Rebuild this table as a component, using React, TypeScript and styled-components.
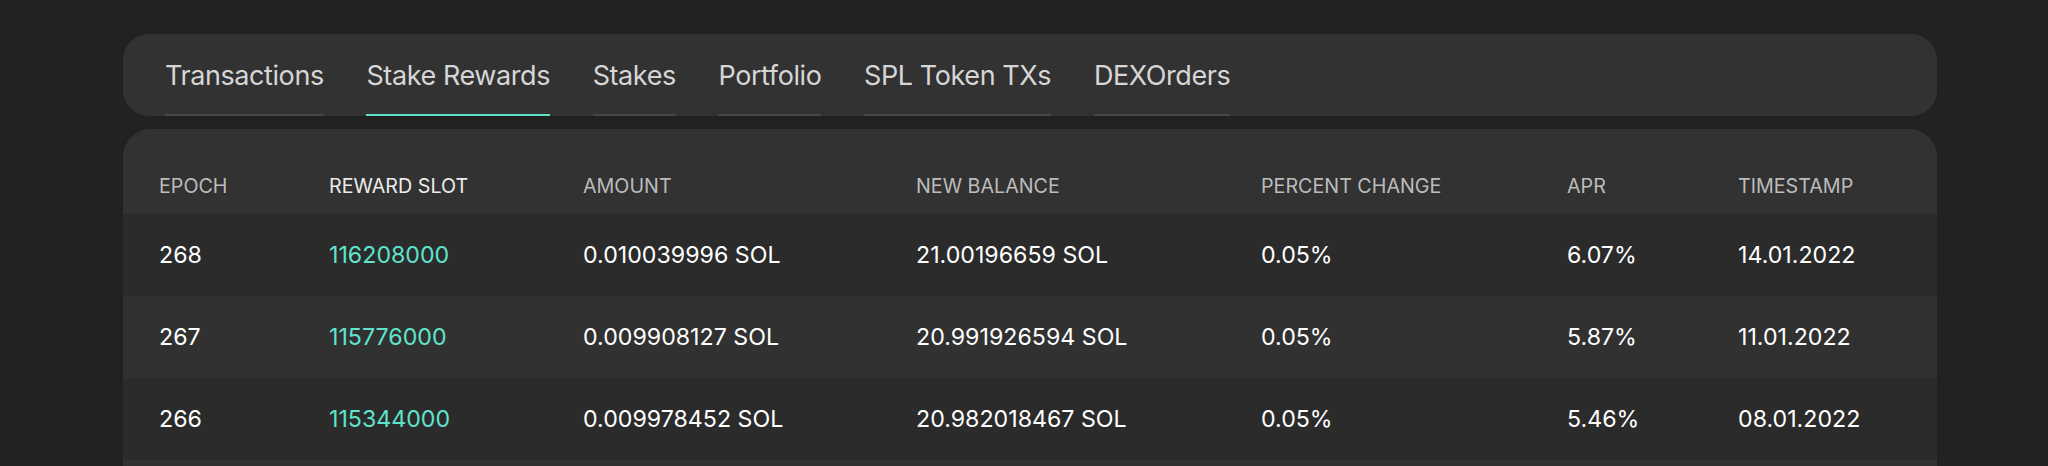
import React from "react";
import styled, { createGlobalStyle } from "styled-components";

const GlobalStyle = createGlobalStyle`
  html, body {
    margin: 0;
    padding: 0;
    background: #242424;
  }
  body {
    font-family: Inter, "Noto Sans", "Liberation Sans", sans-serif;
    -webkit-font-smoothing: antialiased;
  }
`;

const Page = styled.div`
  padding: 34px 111px 0 123px;
  min-height: 466px;
  box-sizing: border-box;
  background: #232323;
`;

const TabBar = styled.nav`
  display: flex;
  align-items: stretch;
  gap: 42.7px;
  height: 82px;
  padding: 0 42px;
  border-radius: 26px;
  background: #323232;
  box-sizing: border-box;
  overflow: hidden;
  box-shadow: 0 0 10px rgba(0, 0, 0, 0.12);
`;

const Tab = styled.div<{ $active?: boolean }>`
  display: flex;
  align-items: center;
  box-sizing: border-box;
  padding-top: 2px;
  font-size: 27px;
  letter-spacing: -0.42px;
  color: #d6d6d6;
  border-bottom: 2px solid ${(p) => (p.$active ? "#5fe0c9" : "#474747")};
  white-space: nowrap;
`;

const Card = styled.section`
  margin-top: 13px;
  border-radius: 28px;
  background: #323232;
  overflow: hidden;
  box-shadow: 0 0 10px rgba(0, 0, 0, 0.12);
`;

const COLS = "170px 254px 333px 345px 306px 171px 1fr";

const HeadRow = styled.div`
  display: grid;
  grid-template-columns: ${COLS};
  align-items: center;
  height: 85px;
  padding: 28px 36px 0;
  box-sizing: border-box;
  background: #323232;
`;

const HeadCell = styled.div<{ $bright?: boolean }>`
  font-size: 19.7px;
  color: ${(p) => (p.$bright ? "#ececec" : "#bcbcbc")};
  text-transform: uppercase;
  white-space: nowrap;
`;

const Row = styled.div<{ $alt?: boolean }>`
  display: grid;
  grid-template-columns: ${COLS};
  align-items: center;
  height: 82px;
  padding: 0 36px;
  box-sizing: border-box;
  background: ${(p) => (p.$alt ? "#313131" : "#2b2b2b")};
`;

const Cell = styled.div<{ $link?: boolean }>`
  font-size: 23.2px;
  color: ${(p) => (p.$link ? "#5fe3cc" : "#ffffff")};
  white-space: nowrap;
`;

const tabs = ["Transactions", "Stake Rewards", "Stakes", "Portfolio", "SPL Token TXs", "DEXOrders"];
const headers = ["Epoch", "Reward Slot", "Amount", "New Balance", "Percent Change", "APR", "Timestamp"];

const rows = [
  ["268", "116208000", "0.010039996 SOL", "21.00196659 SOL", "0.05%", "6.07%", "14.01.2022"],
  ["267", "115776000", "0.009908127 SOL", "20.991926594 SOL", "0.05%", "5.87%", "11.01.2022"],
  ["266", "115344000", "0.009978452 SOL", "20.982018467 SOL", "0.05%", "5.46%", "08.01.2022"],
  ["265", "114912000", "0.009831204 SOL", "20.972040015 SOL", "0.05%", "5.51%", "05.01.2022"],
];

export default function App() {
  return (
    <>
      <GlobalStyle />
      <Page>
        <TabBar>
          {tabs.map((t) => (
            <Tab key={t} $active={t === "Stake Rewards"}>
              {t}
            </Tab>
          ))}
        </TabBar>
        <Card>
          <HeadRow>
            {headers.map((h) => (
              <HeadCell key={h} $bright={h === "Reward Slot"}>
                {h}
              </HeadCell>
            ))}
          </HeadRow>
          {rows.map((r, i) => (
            <Row key={r[0]} $alt={i % 2 === 1}>
              {r.map((c, j) => (
                <Cell key={j} $link={j === 1}>
                  {c}
                </Cell>
              ))}
            </Row>
          ))}
        </Card>
      </Page>
    </>
  );
}
